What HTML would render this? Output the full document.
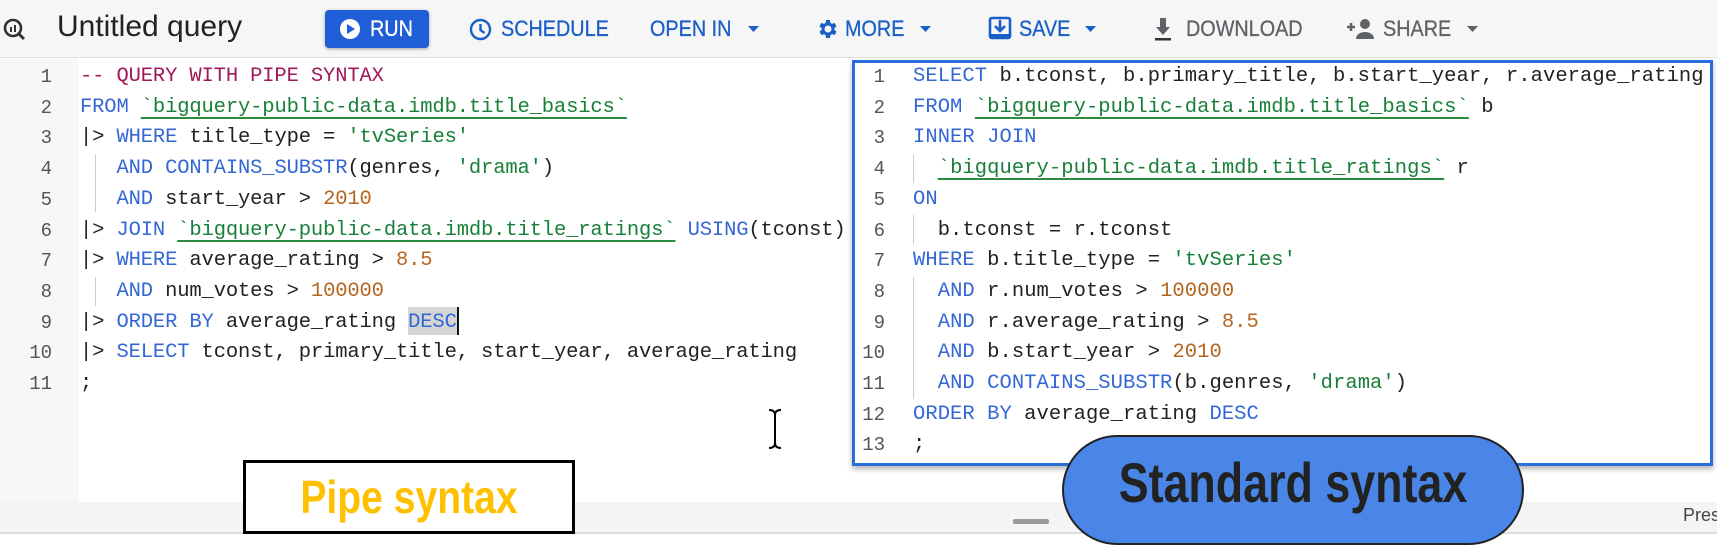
<!DOCTYPE html>
<html><head><meta charset="utf-8"><style>
*{margin:0;padding:0;box-sizing:border-box}
body{width:1717px;height:536px;overflow:hidden;background:#fff;position:relative;font-family:"Liberation Sans",sans-serif}
.tb{position:absolute;left:0;top:0;width:1717px;height:58px;background:#f6f6f6;border-bottom:1px solid #e0e0e0}
.ab{position:absolute;top:16px;font-size:22.5px;color:#1a5fc8;transform-origin:left center;transform:scaleX(.88);white-space:nowrap;-webkit-text-stroke:.3px currentColor}
.g{color:#5f6368}
.ed{position:absolute;font-family:"Liberation Mono",monospace;font-size:20.5px;white-space:pre;line-height:30.7px}
.ln{position:absolute;color:#555;font-family:"Liberation Mono",monospace;font-size:19px;text-align:right;width:30px;line-height:30.7px}
.k{color:#3367d6}.s{color:#188038;text-decoration:underline;text-underline-offset:5px;text-decoration-color:#2e8b3e}.s2{color:#188038}.n{color:#b5651d}.c{color:#a0185a}.t{color:#222}
.guide{position:absolute;width:1px;background:#ccc}
</style></head><body>
<div class="tb"></div>
<svg style="position:absolute;left:2px;top:17px" width="26" height="26" viewBox="0 0 26 26"><circle cx="11" cy="11" r="8" fill="none" stroke="#333" stroke-width="2.6"/><line x1="17" y1="17" x2="22" y2="22" stroke="#333" stroke-width="2.8"/><rect x="8" y="10" width="2" height="5" fill="#333"/><rect x="12" y="8" width="2" height="7" fill="#333"/></svg>
<div style="position:absolute;left:57px;top:10px;font-size:30px;color:#222">Untitled query</div>
<div style="position:absolute;left:325px;top:10px;width:104px;height:38px;background:#1f5ed6;border-radius:4px;box-shadow:0 1px 3px rgba(0,0,0,.35)"></div>
<svg style="position:absolute;left:339px;top:18px" width="22" height="22"><circle cx="11" cy="11" r="10" fill="#fff"/><path d="M8 6 L16 11 L8 16Z" fill="#1f5ed6"/></svg>
<div class="ab" style="left:370px;color:#fff">RUN</div>
<svg style="position:absolute;left:469px;top:18px" width="23" height="23"><circle cx="11.5" cy="11.5" r="9.5" fill="none" stroke="#1a5fc8" stroke-width="2.4"/><path d="M11.5 6v6l4 3" fill="none" stroke="#1a5fc8" stroke-width="2.4"/></svg>
<div class="ab" style="left:501px">SCHEDULE</div>
<div class="ab" style="left:650px">OPEN IN</div>
<svg style="position:absolute;left:748px;top:26px" width="12" height="8"><path d="M0 0h11L5.5 6z" fill="#1a5fc8"/></svg>
<svg style="position:absolute;left:815px;top:17px" width="24" height="24" viewBox="0 0 24 24"><path fill="#1a5fc8" d="M19.4 13a7.5 7.5 0 000-2l2.1-1.6-2-3.5-2.5 1a7 7 0 00-1.7-1L15 3h-4l-.4 2.9a7 7 0 00-1.7 1l-2.5-1-2 3.5L6.6 11a7.5 7.5 0 000 2l-2.1 1.6 2 3.5 2.5-1a7 7 0 001.7 1L11 21h4l.4-2.9a7 7 0 001.7-1l2.5 1 2-3.5zM13 15.5a3.5 3.5 0 110-7 3.5 3.5 0 010 7z"/></svg>
<div class="ab" style="left:845px">MORE</div>
<svg style="position:absolute;left:920px;top:26px" width="12" height="8"><path d="M0 0h11L5.5 6z" fill="#1a5fc8"/></svg>
<svg style="position:absolute;left:988px;top:15px" width="24" height="26"><rect x="2" y="3" width="20" height="20" rx="2" fill="none" stroke="#1a5fc8" stroke-width="2.6"/><path d="M12 5v10M7 11l5 5 5-5" fill="none" stroke="#1a5fc8" stroke-width="2.6"/><rect x="2" y="19" width="20" height="4" fill="#1a5fc8"/></svg>
<div class="ab" style="left:1019px">SAVE</div>
<svg style="position:absolute;left:1085px;top:26px" width="12" height="8"><path d="M0 0h11L5.5 6z" fill="#1a5fc8"/></svg>
<svg style="position:absolute;left:1152px;top:16px" width="22" height="26"><path d="M8 2h6v9h4l-7 8-7-8h4z" fill="#5f6368"/><rect x="3" y="22" width="16" height="2.5" fill="#333"/></svg>
<div class="ab g" style="left:1186px">DOWNLOAD</div>
<svg style="position:absolute;left:1346px;top:17px" width="30" height="24"><path d="M1 10h8M5 6v8" stroke="#5f6368" stroke-width="2.6"/><circle cx="19" cy="7" r="5" fill="#5f6368"/><path d="M10 22c0-5 5-7 9-7s9 2 9 7z" fill="#5f6368"/></svg>
<div class="ab g" style="left:1383px">SHARE</div>
<svg style="position:absolute;left:1467px;top:26px" width="12" height="8"><path d="M0 0h11L5.5 6z" fill="#5f6368"/></svg>

<!-- left editor -->
<div style="position:absolute;left:0;top:59px;width:79px;height:443px;background:#f7f7f7"></div>
<div style="position:absolute;left:0;top:502px;width:1717px;height:32px;background:#f4f4f4;border-bottom:2px solid #ddd"></div>
<div class="ln" style="left:22px;top:62px">1<br>2<br>3<br>4<br>5<br>6<br>7<br>8<br>9<br>10<br>11</div>
<div class="guide" style="left:95px;top:154px;height:58px"></div>
<div class="guide" style="left:95px;top:277px;height:29px"></div>
<div style="position:absolute;left:408px;top:307px;width:50px;height:28px;background:#d5d5d5"></div>
<div style="position:absolute;left:457px;top:307px;width:2px;height:28px;background:#111"></div>
<div class="ed t" style="left:80px;top:62px;letter-spacing:-.15px"><span class="c">-- QUERY WITH PIPE SYNTAX</span>
<span class="k">FROM</span> <span class="s">`bigquery-public-data.imdb.title_basics`</span>
|&gt; <span class="k">WHERE</span> title_type = <span class="s2">'tvSeries'</span>
   <span class="k">AND CONTAINS_SUBSTR</span>(genres, <span class="s2">'drama'</span>)
   <span class="k">AND</span> start_year &gt; <span class="n">2010</span>
|&gt; <span class="k">JOIN</span> <span class="s">`bigquery-public-data.imdb.title_ratings`</span> <span class="k">USING</span>(tconst)
|&gt; <span class="k">WHERE</span> average_rating &gt; <span class="n">8.5</span>
   <span class="k">AND</span> num_votes &gt; <span class="n">100000</span>
|&gt; <span class="k">ORDER BY</span> average_rating <span class="k">DESC</span>
|&gt; <span class="k">SELECT</span> tconst, primary_title, start_year, average_rating
;</div>
<svg style="position:absolute;left:766px;top:408px" width="18" height="42"><path d="M3 2q6 0 6 5v28q0 5-6 5M15 2q-6 0-6 5v28q0 5 6 5" fill="none" stroke="#000" stroke-width="2"/></svg>

<!-- right panel -->
<div style="position:absolute;left:852px;top:60px;width:861px;height:406px;background:#fff;border:3px solid #2a6fd9;box-shadow:0 3px 5px rgba(0,0,0,.3)"></div>
<div class="ln" style="left:855px;top:62px;width:30px">1<br>2<br>3<br>4<br>5<br>6<br>7<br>8<br>9<br>10<br>11<br>12<br>13</div>
<div class="guide" style="left:913px;top:154px;height:29px"></div>
<div class="guide" style="left:913px;top:215px;height:29px"></div>
<div class="guide" style="left:913px;top:277px;height:122px"></div>
<div class="ed t" style="left:913px;top:62px;letter-spacing:.05px"><span class="k">SELECT</span> b.tconst, b.primary_title, b.start_year, r.average_rating
<span class="k">FROM</span> <span class="s">`bigquery-public-data.imdb.title_basics`</span> b
<span class="k">INNER JOIN</span>
  <span class="s">`bigquery-public-data.imdb.title_ratings`</span> r
<span class="k">ON</span>
  b.tconst = r.tconst
<span class="k">WHERE</span> b.title_type = <span class="s2">'tvSeries'</span>
  <span class="k">AND</span> r.num_votes &gt; <span class="n">100000</span>
  <span class="k">AND</span> r.average_rating &gt; <span class="n">8.5</span>
  <span class="k">AND</span> b.start_year &gt; <span class="n">2010</span>
  <span class="k">AND CONTAINS_SUBSTR</span>(b.genres, <span class="s2">'drama'</span>)
<span class="k">ORDER BY</span> average_rating <span class="k">DESC</span>
;</div>

<!-- labels -->
<div style="position:absolute;left:243px;top:460px;width:332px;height:74px;border:3px solid #000;background:#fff"></div>
<div style="position:absolute;left:243px;top:471px;width:332px;text-align:center;font-size:46px;line-height:52px;font-weight:bold;color:#ffc000;transform:scaleX(.85)">Pipe syntax</div>
<div style="position:absolute;left:1013px;top:519px;width:36px;height:5px;background:#999;border-radius:2px"></div>
<div style="position:absolute;left:1062px;top:435px;width:462px;height:110px;background:#4a86e8;border:2px solid #222;border-radius:55px"></div>
<div style="position:absolute;left:1062px;top:451px;width:462px;text-align:center;font-size:56px;line-height:64px;font-weight:bold;color:#222;transform:scaleX(.8)">Standard syntax</div>
<div style="position:absolute;left:1683px;top:505px;font-size:18px;color:#444">Pres</div>
</body></html>
